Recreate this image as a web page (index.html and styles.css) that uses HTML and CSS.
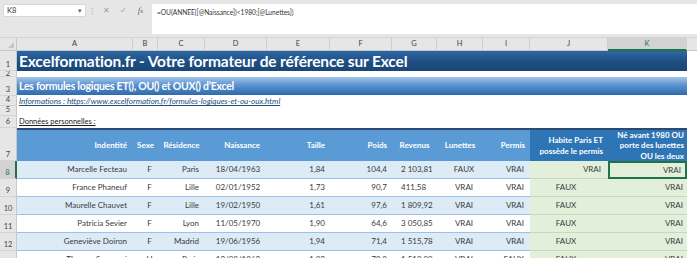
FILE: index.html
```html
<!DOCTYPE html>
<html lang="fr">
<head>
<meta charset="utf-8">
<title>Excelformation</title>
<link rel="stylesheet" href="styles.css">
</head>
<body>
<div class="toolbar">
  <div class="namebox"><span>K8</span><span class="caret">▾</span></div>
  <div class="sep">⁝</div>
  <div class="btn first">✕</div>
  <div class="btn">✓</div>
  <div class="btn fx"><i>f</i><span>x</span></div>
  <div class="formula">=OU(ANNEE([@Naissance])&lt;1980;[@Lunettes])</div>
</div>
<div class="sheet">
  <div class="corner"><span class="tri"></span></div>
  <div class="ch">A</div><div class="ch">B</div><div class="ch">C</div><div class="ch">D</div><div class="ch">E</div><div class="ch">F</div><div class="ch">G</div><div class="ch">H</div><div class="ch">I</div><div class="ch">J</div><div class="ch sel">K</div><div class="ch last"></div>

  <div class="rh">1</div><div class="title">Excelformation.fr - Votre formateur de référence sur Excel</div><div class="blank"></div>
  <div class="rh tiny">2</div><div class="gap2"></div><div class="blank"></div>
  <div class="rh">3</div><div class="subtitle">Les formules logiques ET(), OU() et OUX() d’Excel</div><div class="blank"></div>
  <div class="rh">4</div><div class="info">Informations : https://www.excelformation.fr/formules-logiques-et-ou-oux.html</div><div class="blank"></div>
  <div class="rh">5</div><div class="empty"></div><div class="blank"></div>
  <div class="rh">6</div><div class="label">Données personnelles :</div><div class="blank"></div>

  <div class="rh">7</div>
  <div class="h r pa">Indentité</div>
  <div class="h ctr">Sexe</div>
  <div class="h ctr">Résidence</div>
  <div class="h r pd">Naissance</div>
  <div class="h r pe">Taille</div>
  <div class="h r pe">Poids</div>
  <div class="h ctr">Revenus</div>
  <div class="h ctr">Lunettes</div>
  <div class="h r pe">Permis</div>
  <div class="h dk r pj">Habite Paris ET<br>possède le permis</div>
  <div class="h dk r pk">Né avant 1980 OU<br>porte des lunettes<br>OU les deux</div>
  <div class="blank"></div>

  <div class="rh rsel">8</div>
  <div class="d b r pa">Marcelle Fecteau</div><div class="d b ctr pb">F</div><div class="d b r pc">Paris</div><div class="d b ctr pdd">18/04/1963</div><div class="d b r pe">1,84</div><div class="d b r pe">104,4</div><div class="d b pg">2 103,81</div><div class="d b ctr ph">FAUX</div><div class="d b r pi">VRAI</div><div class="d g r pj2">VRAI</div><div class="d g r pk act">VRAI</div><div class="blank"></div>

  <div class="rh">9</div>
  <div class="d w r pa">France Phaneuf</div><div class="d w ctr pb">F</div><div class="d w r pc">Lille</div><div class="d w ctr pdd">02/01/1952</div><div class="d w r pe">1,73</div><div class="d w r pe">90,7</div><div class="d w pg">411,58</div><div class="d w ctr ph">VRAI</div><div class="d w r pi">VRAI</div><div class="d g ctr pjc">FAUX</div><div class="d g r pk">VRAI</div><div class="blank"></div>

  <div class="rh">10</div>
  <div class="d b r pa">Maurelle Chauvet</div><div class="d b ctr pb">F</div><div class="d b r pc">Lille</div><div class="d b ctr pdd">19/02/1950</div><div class="d b r pe">1,61</div><div class="d b r pe">97,6</div><div class="d b pg">1 809,92</div><div class="d b ctr ph">VRAI</div><div class="d b r pi">VRAI</div><div class="d g ctr pjc">FAUX</div><div class="d g r pk">VRAI</div><div class="blank"></div>

  <div class="rh">11</div>
  <div class="d w r pa">Patricia Sevier</div><div class="d w ctr pb">F</div><div class="d w r pc">Lyon</div><div class="d w ctr pdd">11/05/1970</div><div class="d w r pe">1,90</div><div class="d w r pe">64,6</div><div class="d w pg">3 050,85</div><div class="d w ctr ph">VRAI</div><div class="d w r pi">VRAI</div><div class="d g ctr pjc">FAUX</div><div class="d g r pk">VRAI</div><div class="blank"></div>

  <div class="rh">12</div>
  <div class="d b r pa">Geneviève Doiron</div><div class="d b ctr pb">F</div><div class="d b r pc">Madrid</div><div class="d b ctr pdd">19/06/1956</div><div class="d b r pe">1,94</div><div class="d b r pe">71,4</div><div class="d b pg">1 515,78</div><div class="d b ctr ph">VRAI</div><div class="d b r pi">VRAI</div><div class="d g ctr pjc">FAUX</div><div class="d g r pk">VRAI</div><div class="blank"></div>

  <div class="rh">13</div>
  <div class="d w r pa">Thomas Sansouci</div><div class="d w ctr pb">H</div><div class="d w r pc">Paris</div><div class="d w ctr pdd">12/08/1962</div><div class="d w r pe">1,82</div><div class="d w r pe">79,8</div><div class="d w pg">1 510,00</div><div class="d w ctr ph">VRAI</div><div class="d w r pi">FAUX</div><div class="d g ctr pjc">FAUX</div><div class="d g r pk">VRAI</div><div class="blank"></div>
</div>
</body>
</html>
```
FILE: styles.css
```css
html, body {
  margin: 0;
  padding: 0;
  width: 697px;
  height: 258px;
  overflow: hidden;
  background: #ffffff;
  font-family: Lato, "Open Sans", "Liberation Sans", sans-serif;
}

.toolbar {
  height: 38px;
  box-sizing: border-box;
  background: #e6e6e6;
  display: flex;
  align-items: flex-start;
  padding: 4px 0 0 3px;
  border-bottom: 1px solid #d4d4d4;
}
.namebox {
  width: 83px;
  height: 13px;
  box-sizing: border-box;
  background: #fff;
  border: 1px solid #d8d8d8;
  display: flex;
  justify-content: space-between;
  align-items: center;
  padding: 0 3px 0 3px;
  font-size: 7.5px;
  color: #333;
}
.caret { font-size: 7px; color: #666; }
.sep {
  width: 12px;
  text-align: center;
  font-size: 9px;
  color: #a8a8a8;
  line-height: 13px;
}
.btn {
  width: 17px;
  text-align: center;
  font-size: 8px;
  line-height: 13px;
  color: #a0a0a0;
}
.btn.first { margin-left: 0; }
.fx { color: #666; font-family: "Liberation Serif", serif; font-size: 9px; }
.fx span { font-size: 6px; }
.formula {
  flex: 1;
  height: 30px;
  margin-left: 3px;
  background: #fff;
  box-sizing: border-box;
  padding: 4px 5px;
  font-size: 6.6px;
  color: #333;
  font-family: Lato, "Liberation Sans", sans-serif;
}

.sheet {
  display: grid;
  grid-template-columns: 17px 116px 25px 47px 62px 63px 62px 45px 46px 47px 78px 79px 10px;
  grid-template-rows: 13px 20px 6px 19px 10px 10px 12px 33px 18px 18px 18px 18px 18px 18px;
  font-size: 8px;
  color: #3a3a3a;
}
.corner {
  background: #e6e6e6;
  border-right: 1px solid #c8c8c8;
  border-bottom: 1px solid #c8c8c8;
  box-sizing: border-box;
  position: relative;
}
.tri {
  position: absolute;
  right: 2px;
  bottom: 2px;
  width: 0;
  height: 0;
  border-left: 6px solid transparent;
  border-bottom: 6px solid #c4c4c4;
}
.ch {
  background: #e6e6e6;
  border-right: 1px solid #cfcfcf;
  border-bottom: 1px solid #c8c8c8;
  box-sizing: border-box;
  text-align: center;
  font-size: 7.5px;
  line-height: 12px;
  color: #444;
}
.ch.sel {
  background: #d2d2d2;
  border-bottom: 2px solid #217346;
  color: #217346;
}
.ch.last { border-right: none; }

.rh {
  background: #e6e6e6;
  border-right: 1px solid #c8c8c8;
  border-bottom: 1px solid #d4d4d4;
  box-sizing: border-box;
  font-size: 7.5px;
  color: #444;
  display: flex;
  align-items: flex-end;
  justify-content: center;
  line-height: 8px;
  padding-bottom: 1px;
  overflow: hidden;
}
.rh.tiny {
  line-height: 5px;
  padding-bottom: 0;
  align-items: flex-start;
}
.rh.rsel {
  background: #d2d2d2;
  color: #217346;
  border-right: 2px solid #217346;
}
.blank { background: #fff; }

.title {
  grid-column: span 11;
  background: linear-gradient(#2c67a3, #1d4d80 60%, #1a4676);
  color: #fff;
  font-weight: 700;
  font-size: 15.5px;
  letter-spacing: -0.15px;
  line-height: 20px;
  padding-left: 2px;
  white-space: nowrap;
  overflow: hidden;
}
.gap2 { grid-column: span 11; background: #fff; }
.subtitle {
  grid-column: span 11;
  background: linear-gradient(#a3c6e8, #5b93cf 45%, #2f6aae);
  color: #fff;
  font-weight: 700;
  font-size: 10.5px;
  letter-spacing: -0.25px;
  line-height: 18px;
  padding-left: 2px;
  white-space: nowrap;
  border-bottom: 1px solid #fff;
  box-sizing: border-box;
}
.info {
  grid-column: span 11;
  font-size: 8px;
  font-style: italic;
  text-decoration: underline;
  color: #1f4e79;
  line-height: 10px;
  padding-left: 2px;
  white-space: nowrap;
}
.empty { grid-column: span 11; }
.label {
  grid-column: span 11;
  font-size: 7.5px;
  text-decoration: underline;
  color: #222;
  line-height: 12px;
  padding-left: 2px;
  white-space: nowrap;
}

.h {
  background: #5b9bd5;
  color: #fff;
  font-weight: 700;
  font-size: 8px;
  line-height: 10.5px;
  border-top: 2px solid #2a4a74;
  box-sizing: border-box;
  display: flex;
  flex-direction: column;
  justify-content: center;
  white-space: nowrap;
}
.h.dk { background: #2e75b6; }
.h.r { align-items: flex-end; text-align: right; }
.h.ctr { align-items: center; text-align: center; }

.d {
  box-sizing: border-box;
  border-bottom: 1px solid #9bc2e6;
  display: flex;
  align-items: center;
  white-space: nowrap;
  font-size: 8px;
  line-height: 17px;
  overflow: hidden;
}
.d.b { background: #ddebf7; }
.d.w { background: #fff; }
.d.g { background: #e2efda; border-bottom: 1px solid #c9d9bd; }
.d.r { justify-content: flex-end; }
.d.ctr { justify-content: center; }
.d.act { border: 2px solid #217346; }

.pa { padding-right: 6px; }
.pb { padding-left: 8px; }
.pc { padding-right: 6px; }
.pd { padding-right: 7px; }
.pdd { padding-left: 4px; }
.pe { padding-right: 5px; }
.pg { padding-left: 9px; }
.ph { padding-left: 8px; }
.pi { padding-right: 6px; }
.pj { padding-right: 5px; }
.pj2 { padding-right: 7px; }
.pjc { padding-right: 6px; }
.pk { padding-right: 4px; }
.h.pk { padding-right: 3px; }
```
